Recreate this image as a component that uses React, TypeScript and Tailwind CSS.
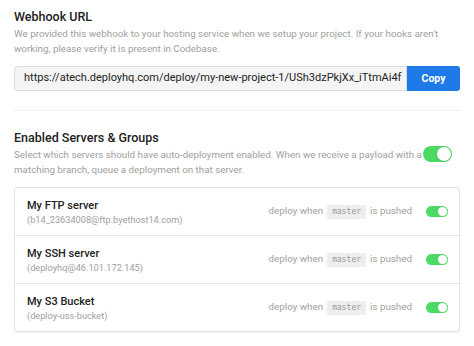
import React from "react"

const servers = [
  { name: "My FTP server", host: "(b14_23634008@ftp.byethost14.com)" },
  { name: "My SSH server", host: "(deployhq@46.101.172.145)" },
  { name: "My S3 Bucket", host: "(deploy-uss-bucket)" },
]

function Toggle({ big = false }: { big?: boolean }) {
  if (big) {
    return (
      <div className="flex h-[16px] w-[29px] items-center justify-end rounded-full bg-[#4cd964] p-[1px]">
        <div className="h-[14px] w-[14px] rounded-full bg-white shadow-sm"></div>
      </div>
    )
  }
  return (
    <div className="flex h-[11px] w-[22px] items-center justify-end rounded-full bg-[#4cd964] p-[1px]">
      <div className="h-[9px] w-[9px] rounded-full bg-white"></div>
    </div>
  )
}

export default function App() {
  return (
    <div className="h-[346px] w-[474px] overflow-hidden bg-white px-[14px] pt-[8px] font-['Roboto',sans-serif] text-[#222]">
      <h2 className="text-[12.5px] font-medium leading-[18px]">Webhook URL</h2>
      <p className="text-[9.8px] leading-[15px] text-[#a0a0a0]">
        We provided this webhook to your hosting service when we setup your project. If your hooks aren't working, please verify it is present in Codebase.
      </p>
      <div className="mt-[10px] flex h-[25px]">
        <div className="flex min-w-0 flex-1 items-center overflow-hidden whitespace-nowrap rounded-l-[3px] border border-[#dcdcdc] bg-[#f4f4f4] pl-[9px] text-[11px] text-[#222]">
          https://atech.deployhq.com/deploy/my-new-project-1/USh3dzPkjXx_iTtmAi4f
        </div>
        <button className="w-[53px] shrink-0 rounded-r-[3px] bg-[#1d7ae6] text-[10.5px] font-bold text-white">Copy</button>
      </div>
      <div className="mt-[19px] h-px bg-[#eeeeee]"></div>

      <h2 className="mt-[18px] text-[12.5px] font-medium leading-[18px]">Enabled Servers &amp; Groups</h2>
      <div className="relative">
        <p className="pr-[12px] text-[9.8px] leading-[15px] text-[#a0a0a0]">
          Select which servers should have auto-deployment enabled. When we receive a payload with a matching branch, queue a deployment on that server.
        </p>
        <div className="absolute right-[8px] top-[-1px]">
          <Toggle big />
        </div>
      </div>

      <div className="mt-[10px] rounded-[3px] border border-[#e3e3e3] shadow-[0_1px_2px_rgba(0,0,0,0.06)]">
        {servers.map((s, i) => (
          <div
            key={s.name}
            className={`flex items-center pl-[12px] pr-[11px] ${i > 0 ? "h-[48px] border-t border-[#e6e6e6]" : "h-[47px]"}`}
          >
            <div className="flex-1">
              <div className="text-[11px] font-medium leading-[15px]">{s.name}</div>
              <div className="text-[9.2px] leading-[13px] text-[#a0a0a0]">{s.host}</div>
            </div>
            <div className="flex items-center text-[9.8px] text-[#a0a0a0]">
              <span>deploy when</span>
              <span className="mx-[4px] rounded-[2px] bg-[#eeeeee] px-[5px] py-[1px] font-['DejaVu_Sans_Mono',monospace] text-[8px] text-[#999]">master</span>
              <span>is pushed</span>
            </div>
            <div className="ml-[14px]">
              <Toggle />
            </div>
          </div>
        ))}
      </div>
    </div>
  )
}
